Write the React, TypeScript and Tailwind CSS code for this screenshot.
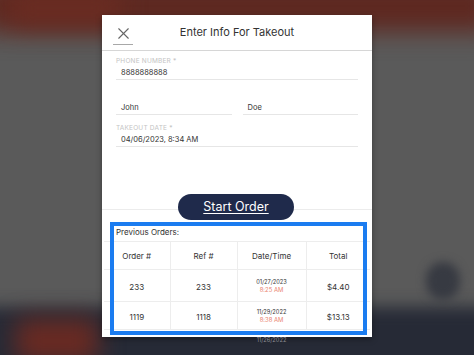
import { X } from 'lucide-react'

type Order = { order: string; ref: string; date: string; time: string; total: string }

const orders: Order[] = [
  { order: '233', ref: '233', date: '01/27/2023', time: '8:25 AM', total: '$4.40' },
  { order: '1119', ref: '1118', date: '11/29/2022', time: '8:38 AM', total: '$13.13' },
]

const font = { fontFamily: 'Inter, "Noto Sans", sans-serif' }

function Field({ label, value }: { label?: string; value: string }) {
  return (
    <div>
      {label && <div className="text-[6.5px] leading-[9px] tracking-[0.2px] text-[#c4c4c4]">{label}</div>}
      <div className={`${label ? 'mt-[2px]' : ''} border-b border-[#e6e6e6] pb-[1px] pl-[5px] text-[7.5px] leading-[10px] text-[#333]`}>
        {value}
      </div>
    </div>
  )
}

export default function App() {
  return (
    <div className="relative h-[355px] w-[474px] overflow-hidden bg-[#5a5a5a]" style={font}>
      {/* blurred app behind the dialog */}
      <div className="absolute inset-x-[-20px] top-[-20px] h-[52px] bg-[#5e2820] blur-md" />
      <div className="absolute left-[10px] top-[-10px] h-[36px] w-[110px] bg-[#6a2c22] blur-md" />
      <div className="absolute inset-x-[-20px] bottom-[-20px] h-[68px] bg-[#262a36] blur-sm" />
      <div className="absolute bottom-[-8px] left-[16px] h-[44px] w-[82px] rounded-md bg-[#6a2a22] blur-md" />
      <div className="absolute left-[426px] top-[262px] h-[38px] w-[34px] rounded-full bg-[#373a42] blur-[5px]" />

      {/* dialog */}
      <div className="absolute left-[102px] top-[15px] h-[322px] w-[270px] bg-white shadow-[0_2px_6px_rgba(0,0,0,0.35)]">
        <div className="grid h-[36px] grid-cols-[40px_1fr_40px] items-center border-b border-[#d6d6d6]">
          <div className="flex flex-col items-center pl-[2px] pt-[4px]">
            <X size={19} strokeWidth={1.4} className="text-[#666]" />
            <div className="mt-[1px] h-[1.5px] w-[20px] bg-[#a8a8a8]" />
          </div>
          <div className="text-center text-[11px] text-[#333]">Enter Info For Takeout</div>
          <div />
        </div>

        <div className="px-[14px] pt-[6px]">
          <Field label="PHONE NUMBER *" value="8888888888" />
          <div className="mt-[23px] grid grid-cols-2 gap-x-[11px]">
            <Field value="John" />
            <Field value="Doe" />
          </div>
          <div className="mt-[9px]">
            <Field label="TAKEOUT DATE *" value="04/06/2023, 8:34 AM" />
          </div>
        </div>

        <div className="relative mt-[47px] flex h-[26px] justify-center">
          <div className="absolute inset-x-0 top-[15px] h-px bg-[#ececec]" />
          <button className="relative ml-[-2px] h-[26px] w-[116px] rounded-full bg-[#1f2a4b] text-[12.5px] text-white underline underline-offset-2">
            Start Order
          </button>
        </div>

        <div className="mt-[7px] pl-[14px] text-[8px] leading-[10px] text-[#333]">Previous Orders:</div>

        <table className="mx-[2px] mt-[4px] w-[266px] table-fixed border-collapse text-[8px] text-[#333]">
          <colgroup>
            <col className="w-[66px]" />
            <col className="w-[67px]" />
            <col className="w-[69px]" />
            <col className="w-[64px]" />
          </colgroup>
          <thead>
            <tr className="h-[28px] border-y border-[#ededed]">
              <th className="font-normal">Order #</th>
              <th className="border-l border-[#ededed] font-normal">Ref #</th>
              <th className="border-l border-[#ededed] font-normal">Date/Time</th>
              <th className="border-l border-[#ededed] font-normal">Total</th>
            </tr>
          </thead>
          <tbody>
            {orders.map((o, i) => (
              <tr key={o.order} className={`${i === 0 ? 'h-[32px]' : 'h-[28px]'} border-b border-[#ededed] text-center`}>
                <td className="pt-[2px]">{o.order}</td>
                <td className="border-l border-[#ededed] pt-[2px]">{o.ref}</td>
                <td className="border-l border-[#ededed]">
                  <div className="text-[5.7px] leading-[8px]">{o.date}</div>
                  <div className="text-[5.9px] leading-[8px] text-[#ea8470]">{o.time}</div>
                </td>
                <td className="border-l border-[#ededed] pt-[2px]">{o.total}</td>
              </tr>
            ))}
            <tr className="h-[20px] align-top text-center">
              <td />
              <td />
              <td className="pt-[6px] text-[5.7px] leading-[8px] text-[#8e8f96]">11/26/2022</td>
              <td />
            </tr>
          </tbody>
        </table>

        {/* highlight box drawn over the orders */}
        <div className="absolute left-[8px] top-[207px] h-[113px] w-[257px] border-[4px] border-[#1b7cf0]" />
      </div>
    </div>
  )
}
